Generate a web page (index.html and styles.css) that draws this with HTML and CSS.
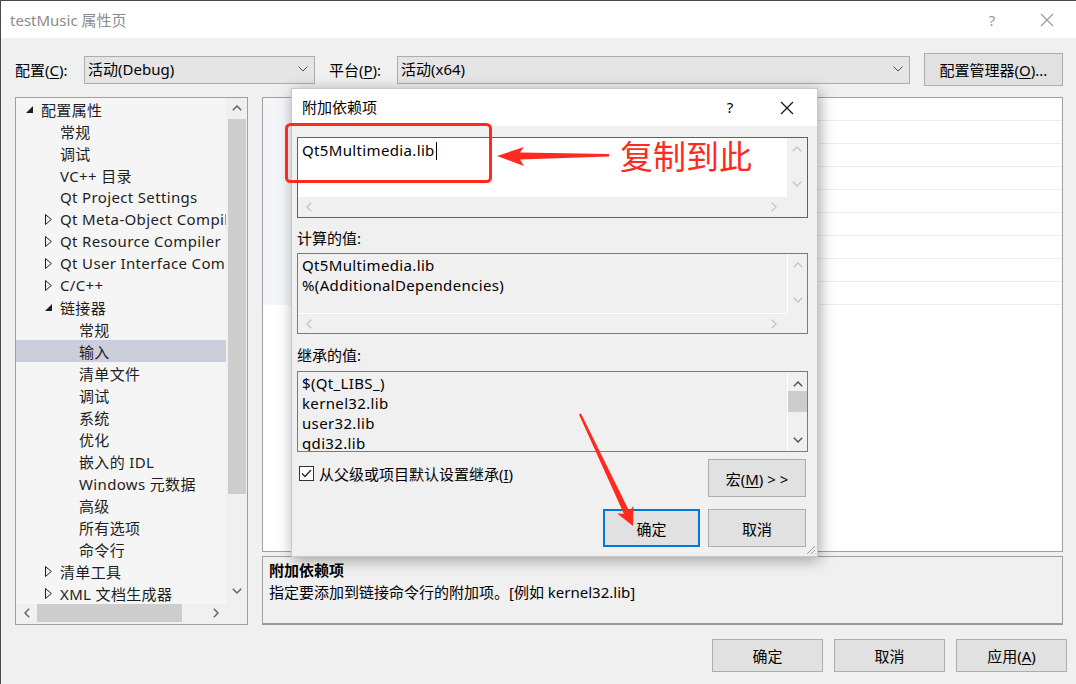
FILE: index.html
```html
<!DOCTYPE html>
<html lang="zh-CN">
<head>
    <meta charset="UTF-8">
    <title>testMusic 属性页</title>
    <link rel="stylesheet" href="styles.css">
</head>
<body>
<div class="window">
    <div class="titlebar">
        <span class="title">testMusic 属性页</span>
        <span class="tb-help">?</span>
        <span class="tb-close">
            <svg width="14" height="14" viewBox="0 0 14 14"><path d="M1 1L13 13M13 1L1 13" stroke="#9a9a9a" stroke-width="1.2" fill="none"/></svg>
        </span>
    </div>

    <div class="toolbar">
        <span class="lbl lbl-config">配置(<u>C</u>):</span>
        <div class="combo combo-config">
            <span>活动(Debug)</span>
            <svg width="10" height="6" viewBox="0 0 10 6"><polyline points="0.5,0.5 5,5 9.5,0.5" fill="none" stroke="#505050" stroke-width="1"/></svg>
        </div>
        <span class="lbl lbl-platform">平台(<u>P</u>):</span>
        <div class="combo combo-platform">
            <span>活动(x64)</span>
            <svg width="10" height="6" viewBox="0 0 10 6"><polyline points="0.5,0.5 5,5 9.5,0.5" fill="none" stroke="#505050" stroke-width="1"/></svg>
        </div>
        <button class="btn btn-manager">配置管理器(<u>O</u>)...</button>
    </div>

    <div class="main">
        <div class="tree">
            <div class="tree-list">
                <div class="row l0"><span class="tg"><svg width="7" height="7" viewBox="0 0 7 7"><polygon points="7,0 7,7 0,7" fill="#1e1e1e"/></svg></span>配置属性</div>
                <div class="row l1"><span class="tg"></span>常规</div>
                <div class="row l1"><span class="tg"></span>调试</div>
                <div class="row l1"><span class="tg"></span>VC++ 目录</div>
                <div class="row l1"><span class="tg"></span>Qt Project Settings</div>
                <div class="row l1"><span class="tg"><svg width="7" height="11" viewBox="0 0 7 11"><polygon points="0.5,0.5 6.3,5.5 0.5,10.5" fill="none" stroke="#1e1e1e"/></svg></span>Qt Meta-Object Compiler</div>
                <div class="row l1"><span class="tg"><svg width="7" height="11" viewBox="0 0 7 11"><polygon points="0.5,0.5 6.3,5.5 0.5,10.5" fill="none" stroke="#1e1e1e"/></svg></span>Qt Resource Compiler</div>
                <div class="row l1"><span class="tg"><svg width="7" height="11" viewBox="0 0 7 11"><polygon points="0.5,0.5 6.3,5.5 0.5,10.5" fill="none" stroke="#1e1e1e"/></svg></span>Qt User Interface Compiler</div>
                <div class="row l1"><span class="tg"><svg width="7" height="11" viewBox="0 0 7 11"><polygon points="0.5,0.5 6.3,5.5 0.5,10.5" fill="none" stroke="#1e1e1e"/></svg></span>C/C++</div>
                <div class="row l1"><span class="tg"><svg width="7" height="7" viewBox="0 0 7 7"><polygon points="7,0 7,7 0,7" fill="#1e1e1e"/></svg></span>链接器</div>
                <div class="row l2"><span class="tg"></span>常规</div>
                <div class="row l2 selected"><span class="tg"></span>输入</div>
                <div class="row l2"><span class="tg"></span>清单文件</div>
                <div class="row l2"><span class="tg"></span>调试</div>
                <div class="row l2"><span class="tg"></span>系统</div>
                <div class="row l2"><span class="tg"></span>优化</div>
                <div class="row l2"><span class="tg"></span>嵌入的 IDL</div>
                <div class="row l2"><span class="tg"></span>Windows 元数据</div>
                <div class="row l2"><span class="tg"></span>高级</div>
                <div class="row l2"><span class="tg"></span>所有选项</div>
                <div class="row l2"><span class="tg"></span>命令行</div>
                <div class="row l1"><span class="tg"><svg width="7" height="11" viewBox="0 0 7 11"><polygon points="0.5,0.5 6.3,5.5 0.5,10.5" fill="none" stroke="#1e1e1e"/></svg></span>清单工具</div>
                <div class="row l1"><span class="tg"><svg width="7" height="11" viewBox="0 0 7 11"><polygon points="0.5,0.5 6.3,5.5 0.5,10.5" fill="none" stroke="#1e1e1e"/></svg></span>XML 文档生成器</div>
            </div>
            <div class="vscroll">
                <span class="arr"><svg width="10" height="6" viewBox="0 0 10 6"><polyline points="0.8,5.2 5,1 9.2,5.2" fill="none" stroke="#606060" stroke-width="1.4"/></svg></span>
                <div class="vthumb"></div>
                <span class="arr arr-end"><svg width="10" height="6" viewBox="0 0 10 6"><polyline points="0.8,0.8 5,5 9.2,0.8" fill="none" stroke="#606060" stroke-width="1.4"/></svg></span>
            </div>
            <div class="hscroll">
                <span class="harr"><svg width="6" height="10" viewBox="0 0 6 10"><polyline points="5.2,0.8 1,5 5.2,9.2" fill="none" stroke="#606060" stroke-width="1.4"/></svg></span>
                <div class="hthumb"></div>
                <span class="harr harr-end"><svg width="6" height="10" viewBox="0 0 6 10"><polyline points="0.8,0.8 5,5 0.8,9.2" fill="none" stroke="#606060" stroke-width="1.4"/></svg></span>
            </div>
            <div class="corner"></div>
        </div>

        <div class="right">
            <div class="grid">
                <div class="grid-rows"></div>
            </div>
            <div class="desc">
                <div class="desc-title">附加依赖项</div>
                <div class="desc-text">指定要添加到链接命令行的附加项。[例如 kernel32.lib]</div>
            </div>
        </div>
    </div>

    <div class="footer">
        <button class="btn btn-foot">确定</button>
        <button class="btn btn-foot">取消</button>
        <button class="btn btn-foot">应用(<u>A</u>)</button>
    </div>

    <!-- 附加依赖项 对话框 -->
    <div class="dialog">
        <div class="dlg-title">
            <span class="dlg-name">附加依赖项</span>
            <span class="dlg-help">?</span>
            <span class="dlg-close">
                <svg width="14" height="14" viewBox="0 0 14 14"><path d="M1 1L13 13M13 1L1 13" stroke="#1a1a1a" stroke-width="1.3" fill="none"/></svg>
            </span>
        </div>
        <div class="dlg-body">
            <div class="field field-edit">
                <div class="field-text">Qt5Multimedia.lib<span class="caret"></span></div>
                <div class="field-vs">
                    <svg width="10" height="6" viewBox="0 0 10 6"><polyline points="0.8,5.2 5,1 9.2,5.2" fill="none" stroke="#c4c4c4" stroke-width="1.3"/></svg>
                    <svg width="10" height="6" viewBox="0 0 10 6"><polyline points="0.8,0.8 5,5 9.2,0.8" fill="none" stroke="#c4c4c4" stroke-width="1.3"/></svg>
                </div>
                <div class="field-hs">
                    <svg width="6" height="10" viewBox="0 0 6 10"><polyline points="5.2,0.8 1,5 5.2,9.2" fill="none" stroke="#c4c4c4" stroke-width="1.3"/></svg>
                    <svg width="6" height="10" viewBox="0 0 6 10"><polyline points="0.8,0.8 5,5 0.8,9.2" fill="none" stroke="#c4c4c4" stroke-width="1.3"/></svg>
                </div>
                <div class="field-corner"></div>
            </div>

            <div class="flabel">计算的值:</div>
            <div class="field field-ro">
                <div class="field-text">Qt5Multimedia.lib<br>%(AdditionalDependencies)</div>
                <div class="field-vs">
                    <svg width="10" height="6" viewBox="0 0 10 6"><polyline points="0.8,5.2 5,1 9.2,5.2" fill="none" stroke="#c4c4c4" stroke-width="1.3"/></svg>
                    <svg width="10" height="6" viewBox="0 0 10 6"><polyline points="0.8,0.8 5,5 9.2,0.8" fill="none" stroke="#c4c4c4" stroke-width="1.3"/></svg>
                </div>
                <div class="field-hs">
                    <svg width="6" height="10" viewBox="0 0 6 10"><polyline points="5.2,0.8 1,5 5.2,9.2" fill="none" stroke="#c4c4c4" stroke-width="1.3"/></svg>
                    <svg width="6" height="10" viewBox="0 0 6 10"><polyline points="0.8,0.8 5,5 0.8,9.2" fill="none" stroke="#c4c4c4" stroke-width="1.3"/></svg>
                </div>
                <div class="field-corner"></div>
            </div>

            <div class="flabel flabel-2">继承的值:</div>
            <div class="field field-list">
                <div class="field-text">$(Qt_LIBS_)<br>kernel32.lib<br>user32.lib<br>gdi32.lib</div>
                <div class="field-vs">
                    <svg width="10" height="6" viewBox="0 0 10 6"><polyline points="0.8,5.2 5,1 9.2,5.2" fill="none" stroke="#505050" stroke-width="1.4"/></svg>
                    <div class="list-thumb"></div>
                    <svg class="vs-end" width="10" height="6" viewBox="0 0 10 6"><polyline points="0.8,0.8 5,5 9.2,0.8" fill="none" stroke="#505050" stroke-width="1.4"/></svg>
                </div>
            </div>

            <div class="inherit-row">
                <label class="check">
                    <svg width="15" height="15" viewBox="0 0 15 15"><rect x="0.5" y="0.5" width="14" height="14" fill="#fff" stroke="#333"/><polyline points="3,7.5 6,10.5 12,4" fill="none" stroke="#222" stroke-width="1.3"/></svg>
                    <span>从父级或项目默认设置继承(<u>I</u>)</span>
                </label>
                <button class="btn btn-dlg">宏(<u>M</u>) &gt; &gt;</button>
            </div>

            <div class="dlg-buttons">
                <button class="btn btn-dlg btn-default">确定</button>
                <button class="btn btn-dlg">取消</button>
            </div>
        </div>
        <svg class="grip" width="11" height="11" viewBox="0 0 11 11">
            <path d="M10 2L2 10M10 6L6 10M10 9.5L9.5 10" stroke="#a0a0a0" stroke-width="1" fill="none"/>
        </svg>
    </div>

    <!-- 标注 -->
    <svg class="annot" width="1076" height="684" viewBox="0 0 1076 684">
        <rect x="286.5" y="124.5" width="204" height="57" rx="4" fill="none" stroke="#ff2a1f" stroke-width="3"/>
        <polygon points="497,156 524,147 520,152.5 609,154 609,156.5 520,159.5 524,166" fill="#ff2a1f"/>
        <polygon points="633,526 633.4,505.9 629.3,511.2 581,413.6 579,414.4 623.9,513.8 617.2,513.5" fill="#ff2a1f"/>
    </svg>
    <div class="annot-text">复制到此</div>
</div>
</body>
</html>
```

FILE: styles.css
```css
body {
    margin: 0;
    background: #f0f0f0;
    font-family: "Noto Sans", "Noto Sans CJK SC", sans-serif;
    font-size: 15px;
    color: #000;
}
u {
    text-decoration: underline;
    text-underline-offset: 2px;
}
.window {
    position: relative;
    width: 1076px;
    height: 684px;
    box-sizing: border-box;
    border-top: 1px solid #4a4a4a;
    border-left: 1px solid #4a4a4a;
    overflow: hidden;
}

/* title bar */
.titlebar {
    height: 37px;
    background: #fff;
    display: flex;
    align-items: center;
}
.title {
    padding-left: 9px;
    color: #8c8c8c;
    flex: 1;
}
.tb-help {
    color: #9a9a9a;
    width: 20px;
    text-align: center;
    margin-right: 38px;
}
.tb-close {
    display: flex;
    margin-right: 22px;
}

/* config row */
.toolbar {
    display: flex;
    align-items: center;
    height: 33px;
    margin-top: 16px;
    padding-left: 14px;
}
.lbl {
    display: inline-block;
    margin-top: -2px;
}
.lbl-config {
    width: 69px;
}
.lbl-platform {
    width: 68px;
    margin-left: 14px;
}
.combo {
    height: 28px;
    box-sizing: border-box;
    border: 1px solid #adadad;
    background: #e5e5e5;
    display: flex;
    align-items: center;
    justify-content: space-between;
    padding: 0 6px 2px 3px;
    margin-top: -2px;
}
.combo-config {
    width: 231px;
}
.combo-platform {
    width: 513px;
}
.btn {
    font-family: inherit;
    font-size: 15px;
    color: #000;
    background: #e1e1e1;
    border: 1px solid #adadad;
    padding: 0;
    box-sizing: border-box;
}
.btn-manager {
    margin-left: 14px;
    width: 139px;
    height: 33px;
    margin-top: -2px;
}

/* main area */
.main {
    display: flex;
    margin-top: 10px;
    padding-left: 14px;
    height: 528px;
}
.tree {
    width: 233px;
    height: 528px;
    box-sizing: border-box;
    border: 1px solid #a0a0a0;
    display: grid;
    grid-template-columns: 210px 21px;
    grid-template-rows: 506px 20px;
    background: #f0f0f0;
}
.tree-list {
    background: #f5f5f5;
    overflow: hidden;
}
.row {
    height: 22px;
    display: flex;
    align-items: center;
    white-space: nowrap;
    color: #1e1e1e;
    letter-spacing: 0.35px;
}
.row.l0 { padding-left: 10px; }
.row.l1 { padding-left: 29px; }
.row.l2 { padding-left: 48px; }
.row.selected {
    background: #cccedb;
}
.tg {
    width: 15px;
    flex: none;
    display: flex;
    align-items: center;
}
.vscroll {
    display: flex;
    flex-direction: column;
    align-items: center;
}
.arr {
    height: 20px;
    display: flex;
    align-items: center;
    justify-content: center;
}
.arr-end {
    margin-top: auto;
    margin-bottom: 3px;
}
.vthumb {
    width: 18px;
    height: 375px;
    background: #cdcdcd;
    margin-top: 1px;
}
.hscroll {
    display: flex;
    align-items: center;
    padding-bottom: 3px;
}
.harr {
    width: 21px;
    display: flex;
    justify-content: center;
}
.harr-end {
    margin-left: auto;
}
.hthumb {
    width: 145px;
    height: 18px;
    background: #cdcdcd;
}

.right {
    margin-left: 14px;
    width: 801px;
    display: flex;
    flex-direction: column;
}
.grid {
    height: 455px;
    box-sizing: border-box;
    border: 1px solid #a0a0a0;
    background: #fff;
}
.grid-rows {
    height: 207px;
    background:
        linear-gradient(to right, #f3f5f9 0 28px, transparent 28px),
        repeating-linear-gradient(to bottom, transparent 0 22px, #eceef2 22px 23px);
}
.desc {
    margin-top: 4px;
    height: 69px;
    box-sizing: border-box;
    border: 1px solid #a0a0a0;
    border-bottom: 2px solid #9a9a9a;
    padding: 2px 6px;
    line-height: 22px;
}
.desc-title {
    font-weight: bold;
}

.footer {
    display: flex;
    justify-content: flex-end;
    gap: 11px;
    margin-top: 14px;
    padding-right: 9px;
}
.btn-foot {
    width: 111px;
    height: 33px;
}

/* dialog */
.dialog {
    position: absolute;
    left: 290px;
    top: 87px;
    width: 527px;
    height: 469px;
    box-sizing: border-box;
    border: 1px solid #c8c8c8;
    background: #f0f0f0;
    box-shadow: 2px 3px 14px rgba(0, 0, 0, 0.35);
}
.dlg-title {
    height: 37px;
    background: #fff;
    display: flex;
    align-items: center;
}
.dlg-name {
    flex: 1;
    padding-left: 10px;
    margin-top: -2px;
}
.dlg-help {
    width: 20px;
    text-align: center;
    margin-right: 40px;
    margin-top: -2px;
}
.dlg-close {
    display: flex;
    margin-right: 23px;
}
.dlg-body {
    padding: 11px 0 0 5px;
    width: 511px;
}
.field {
    height: 81px;
    box-sizing: border-box;
    border: 1px solid #7a7a7a;
    display: grid;
    grid-template-columns: 1fr 20px;
    grid-template-rows: 1fr 20px;
    overflow: hidden;
}
.field-text {
    padding: 1px 4px;
    line-height: 20px;
    overflow: hidden;
    white-space: nowrap;
    letter-spacing: 0.35px;
}
.field-edit {
    border-color: #0078d7;
}
.field-edit .field-text {
    background: #fff;
    padding-top: 2px;
}
.caret {
    display: inline-block;
    width: 1px;
    height: 18px;
    background: #000;
    vertical-align: -4px;
    margin-left: 1px;
}
.field-vs {
    display: flex;
    flex-direction: column;
    align-items: center;
    justify-content: space-between;
    padding: 8px 0 10px;
}
.field-hs {
    display: flex;
    align-items: center;
    justify-content: space-between;
    padding: 0 10px 0 8px;
}
.field-ro .field-vs {
    border-left: 1px solid #fff;
}
.field-ro .field-hs {
    border-top: 1px solid #fff;
}
.field-list {
    grid-template-rows: 1fr;
}
.field-list .field-vs {
    justify-content: flex-start;
    padding: 9px 0 8px;
    border-left: 1px solid #fff;
}
.list-thumb {
    width: 19px;
    height: 21px;
    background: #cdcdcd;
    margin-top: 4px;
}
.vs-end {
    margin-top: auto;
}
.flabel {
    height: 35px;
    box-sizing: border-box;
    padding-top: 10px;
    line-height: 20px;
}
.flabel-2 {
    height: 37px;
    padding-top: 11px;
}
.inherit-row {
    display: flex;
    align-items: flex-start;
    justify-content: space-between;
    margin-top: 7px;
    padding-right: 2px;
}
.check {
    display: flex;
    align-items: center;
    gap: 5px;
    padding-left: 2px;
    margin-top: 4px;
}
.btn-dlg {
    width: 98px;
    height: 38px;
}
.dlg-buttons {
    display: flex;
    justify-content: flex-end;
    gap: 8px;
    margin-top: 12px;
    padding-right: 2px;
}
.btn-default {
    border: 2px solid #0078d7;
    width: 97px;
}
.grip {
    position: absolute;
    right: 1px;
    bottom: 1px;
}

/* annotations */
.annot {
    position: absolute;
    left: -1px;
    top: -1px;
    pointer-events: none;
}
.annot-text {
    position: absolute;
    left: 619px;
    top: 131px;
    font-family: "Noto Sans CJK SC", sans-serif;
    font-size: 33px;
    line-height: 46px;
    color: #ff2a1f;
}
```
